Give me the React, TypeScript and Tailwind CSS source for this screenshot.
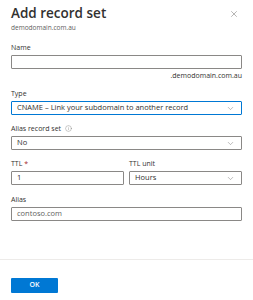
import { ChevronDown, Info, X } from 'lucide-react'

function Label({ children }: { children: React.ReactNode }) {
  return <div className="text-[7px] leading-[9px] text-[#323130] mb-[3px]">{children}</div>
}

function SelectBox({ value, active = false }: { value: string; active?: boolean }) {
  return (
    <div
      className={`flex items-center justify-between h-[14px] px-[5px] border ${
        active ? 'border-[#0078d4]' : 'border-[#8a8886]'
      } rounded-[1px] bg-white`}
    >
      <span className="text-[7.5px] leading-none text-[#323130]">{value}</span>
      <ChevronDown size={9} strokeWidth={1.1} className="text-[#605e5c] mr-[1px]" />
    </div>
  )
}

function TextBox({ value = '', placeholder = false }: { value?: string; placeholder?: boolean }) {
  return (
    <div className="flex items-center h-[14px] px-[5px] border border-[#8a8886] rounded-[1px] bg-white">
      <span className={`text-[7.5px] leading-none ${placeholder ? 'text-[#605e5c]' : 'text-[#323130]'}`}>{value}</span>
    </div>
  )
}

export default function App() {
  return (
    <div
      className="w-[253px] h-[300px] bg-white flex flex-col"
      style={{ fontFamily: '"Open Sans", "Noto Sans", sans-serif' }}
    >
      {/* Header */}
      <div className="px-[11px] pt-[4px] flex items-start justify-between">
        <div>
          <h1 className="text-[13.5px] leading-[18px] font-semibold text-[#323130]">Add record set</h1>
          <div className="text-[6.5px] leading-[9px] text-[#605e5c] mt-[1px]">demodomain.com.au</div>
        </div>
        <button className="mt-[5px] mr-[3px] text-[#605e5c]">
          <X size={10} strokeWidth={1.1} />
        </button>
      </div>

      {/* Form */}
      <div className="px-[11px] pt-[11px] flex-1">
        <Label>Name</Label>
        <TextBox />
        <div className="text-right text-[7px] leading-[9px] text-[#323130] mt-[2px]">.demodomain.com.au</div>

        <div className="mt-[9px]">
          <Label>Type</Label>
          <SelectBox value="CNAME – Link your subdomain to another record" active />
        </div>

        <div className="mt-[9px]">
          <div className="flex items-center gap-[4px] mb-[3px]">
            <span className="text-[7px] leading-[9px] text-[#323130]">Alias record set</span>
            <Info size={7} strokeWidth={1.1} className="text-[#605e5c]" />
          </div>
          <SelectBox value="No" />
        </div>

        <div className="mt-[9px] grid grid-cols-2 gap-[5px]">
          <div>
            <div className="text-[7px] leading-[9px] text-[#323130] mb-[3px]">
              TTL <span className="text-[#a4262c]">*</span>
            </div>
            <TextBox value="1" />
          </div>
          <div>
            <Label>TTL unit</Label>
            <SelectBox value="Hours" />
          </div>
        </div>

        <div className="mt-[10px]">
          <Label>Alias</Label>
          <TextBox value="contoso.com" placeholder />
        </div>
      </div>

      {/* Footer */}
      <div className="border-t border-[#edebe9] px-[11px] pt-[9px] pb-[7px]">
        <button className="w-[47px] h-[15px] bg-[#0078d4] text-white text-[7px] font-semibold rounded-[1px]">OK</button>
      </div>
    </div>
  )
}
